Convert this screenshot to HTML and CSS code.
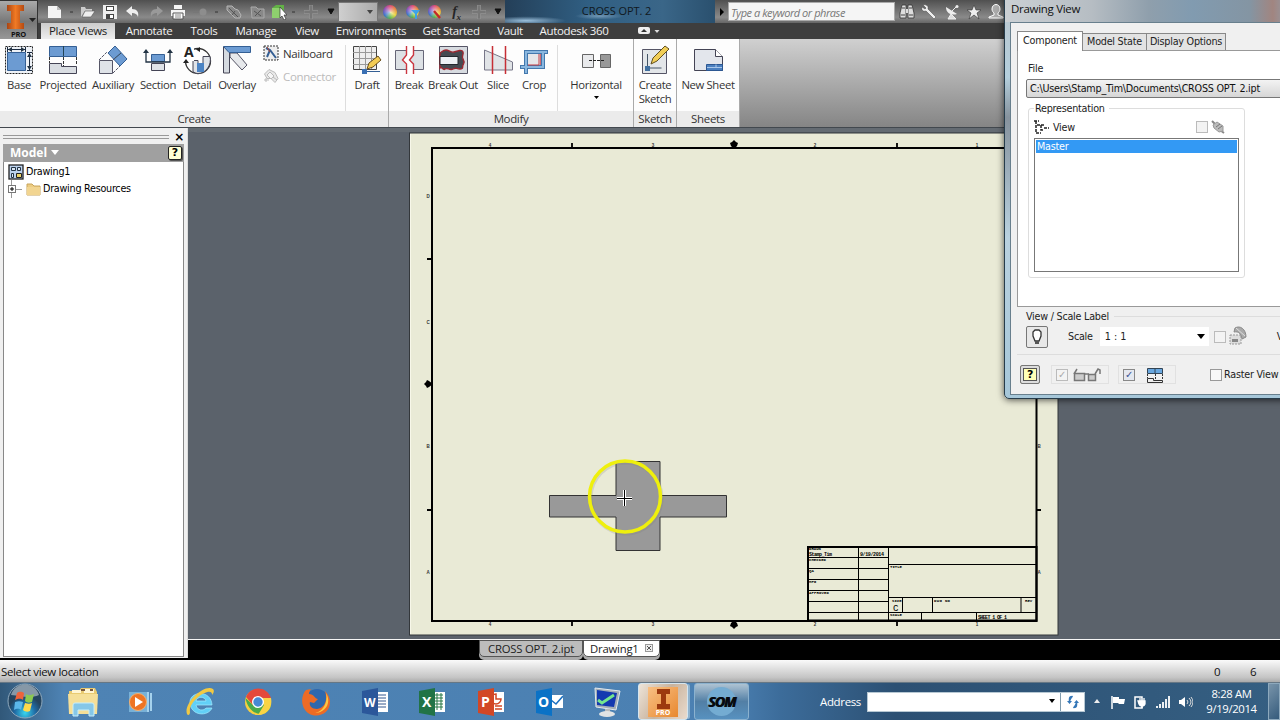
FILE: index.html
```html
<!DOCTYPE html>
<html lang="en">
<head>
<meta charset="utf-8">
<title>CROSS OPT. 2</title>
<link rel="stylesheet" href="styles.css">
</head>
<body>
<div class="screen">
  <header class="header">
    <div class="app">
      <svg width="38" height="39" viewBox="0 0 38 39"><defs><linearGradient id="or" x2="1"><stop offset="0" stop-color="#a84413"/><stop offset=".5" stop-color="#f17a24"/><stop offset="1" stop-color="#b54a12"/></linearGradient></defs><path d="M7 4h17v6h-4v12h4v6H7v-6h4V10H7z" fill="url(#or)"/><path d="M29 17h7l-3.500 4z" fill="#222"/></svg>
      <span class="app-name">PRO</span>
    </div>
    <div class="header-rows">
      <div class="quick">
        <svg width="16" height="14" viewBox="0 0 16 14"><path d="M1 1h9l4 4v8H1z" fill="#f4f4f4"/><path d="M10 1v4h4" fill="#bbb"/></svg>
        <i class="dot"></i>
        <svg width="16" height="14" viewBox="0 0 16 14"><path d="M1 12V2h4l1 2h6v2H5z" fill="#ccc"/><path d="M2 12 5 6h10l-4 6z" fill="#eee" stroke="#555" stroke-width=".6"/></svg>
        <svg width="16" height="16" viewBox="0 0 16 16"><path d="M1 1h14v14H1z" fill="#eee"/><path d="M4 2h8v5H4zM4 10h8v5H4z" fill="#444"/><path d="M5 3h6v3H5zM8 11h3v3H8z" fill="#fff"/></svg>
        <svg width="16" height="14" viewBox="0 0 16 14"><path d="M7 1v3c5 0 7 3 6 8-1-3-3-4-6-4v3L1 6z" fill="#eee"/></svg>
        <svg width="16" height="14" viewBox="0 0 16 14"><path d="M9 1v3C4 4 2 7 3 12c1-3 3-4 6-4v3l6-5z" fill="#999"/></svg>
        <svg width="16" height="16" viewBox="0 0 16 16"><path d="M4 1h8v4H4zM1 6h14v6H1z" fill="#f5f5f5"/><path d="M3 9h10v6H3z" fill="#fff" stroke="#555"/><path d="M5 11h6M5 13h6" stroke="#888"/></svg>
        <svg width="16" height="12" viewBox="0 0 16 12"><path d="M0 6h7" stroke="#777" stroke-width="2"/><circle cx="10" cy="6" r="3.500" fill="#8d8d8d"/></svg>
        <i class="dot"></i>
        <svg width="16" height="14" viewBox="0 0 16 14"><path d="M1 1h5l3 3 3 1 3 5-1 3H9L5 9 1 5z" fill="#888" stroke="#b5b5b5"/><path d="m3 3 9 9M9 6l-3 4" stroke="#555"/></svg>
        <svg width="16" height="14" viewBox="0 0 16 14"><path d="M1 2h5l2 2h6v9H2z" fill="#888" stroke="#aaa"/><path d="m4 6 7 5M11 5l-6 6" stroke="#555" fill="none"/></svg>
        <svg width="16" height="16" viewBox="0 0 16 16"><path d="M1 4 5 1h8v9l-4 4H1z" fill="#62b146"/><path d="M1 4h8v10H1z" fill="#8ed06e"/><path d="M9 3v11l2-2 2 4 2-1-2-4h3z" fill="#fff" stroke="#333" stroke-width=".7"/></svg>
        <i class="dot"></i>
        <svg width="14" height="14" viewBox="0 0 14 14"><path d="M5.500 0h3v5.500H14v3H8.500V14h-3V8.500H0v-3h5.500z" fill="#777" stroke="#999" stroke-width=".6"/></svg>
        <svg width="8" height="8" viewBox="0 0 8 8"><path d="M1 1h6L4 6z" fill="#111" stroke="#111"/></svg>
        <div class="combo"><svg width="8" height="5" viewBox="0 0 8 5"><path d="M1 0h6L4 4z" fill="#444"/></svg></div>
        <i class="ball"></i>
        <i class="ball small"><svg width="9" height="10" viewBox="0 0 9 10"><path d="M0 0h9L6 4v5H4V4z" fill="#3da2e8"/></svg></i>
        <i class="ball small"><svg width="9" height="10" viewBox="0 0 9 10"><path d="m1 1 6 7" stroke="#c22a28" stroke-width="2.500"/></svg></i>
        <span class="fx">f<sub>x</sub></span>
        <svg width="14" height="14" viewBox="0 0 14 14"><path d="M5.500 0h3v5.500H14v3H8.500V14h-3V8.500H0v-3h5.500z" fill="#777" stroke="#999" stroke-width=".6"/></svg>
        <svg width="8" height="8" viewBox="0 0 8 8"><path d="M1 1h6L4 6z" fill="#111" stroke="#111"/></svg>
        <div class="doc-title">CROSS OPT. 2</div>
        <svg width="6" height="8" viewBox="0 0 6 8"><path d="M1 0v8l4-4z" fill="#000"/></svg>
        <div class="search">Type a keyword or phrase</div>
        <svg width="16" height="16" viewBox="0 0 16 16"><path d="M3 1h4v13H1V9zM9 1h4l2 8v5H9z" fill="#ddd" stroke="#333" stroke-width=".8"/><path d="M7 5h2v4H7z" fill="#ddd"/><path d="M2 11h4M10 11h4M3 4h3M10 4h3" stroke="#444"/></svg>
        <svg width="16" height="16" viewBox="0 0 16 16"><path d="M2 1c3-1 6 1 5 4l8 8-2 2-8-8C2 8 0 6 1 3l3 2 1-1z" fill="#eee" stroke="#444" stroke-width=".5"/></svg>
        <svg width="16" height="16" viewBox="0 0 16 16"><path d="M2 3c0 6 5 9 11 7z" fill="#eee"/><path d="m8 7 5-5M7 10l-3 5h8z" stroke="#eee" fill="#ddd"/><circle cx="13" cy="2.500" r="1.500" fill="#eee"/></svg>
        <svg width="16" height="16" viewBox="0 0 16 16"><path d="m8 1 2 5h5l-4 3 2 6-5-4-5 4 2-6-4-3h5z" fill="#eee" stroke="#333" stroke-width=".6"/></svg>
        <svg width="16" height="16" viewBox="0 0 16 16"><path d="M4 5c0-6 8-6 8 0 0 2-1 3-2 4v2l5 2v1H1v-1l5-2V9C5 8 4 7 4 5z" fill="#aaa" stroke="#fff"/></svg>
      </div>
      <nav class="tabs">
        <span class="tab active">Place Views</span><span class="tab">Annotate</span><span class="tab">Tools</span><span class="tab">Manage</span><span class="tab">View</span><span class="tab">Environments</span><span class="tab">Get Started</span><span class="tab">Vault</span><span class="tab">Autodesk 360</span>
        <svg class="tab-toggle" width="22" height="8" viewBox="0 0 22 8"><rect width="12" height="7" rx="2" fill="#eee"/><path d="m3 5 3-3 3 3z" fill="#333"/><path d="M16.500 3h5L19 6z" fill="#ddd"/></svg>
      </nav>
    </div>
  </header>

  <section class="ribbon">
    <div class="panel">
      <div class="tools create">
        <div class="tool"><svg width="30" height="30" viewBox="0 0 30 30"><rect x="1.500" y="1.500" width="27" height="27" fill="#eef2f7" stroke="#222" stroke-dasharray="2 1"/><path d="M3.500 7.500h18v18h-18z" fill="#6c9bd2" stroke="#345f94"/><path d="M4 4.500h17M25.500 8v18M3.500 2v5M21.500 2v5M23 7.500h5M23 25.500h5" stroke="#1a2a40"/><path d="m8 2-4 2.500L8 7M17 2l4 2.500L17 7M23 12l2.500-4 2.500 4M23 21l2.500 4 2.500-4" fill="#234"/></svg>Base</div>
        <div class="tool"><svg width="30" height="30" viewBox="0 0 30 30"><path d="M1.500 1.500h27v10h-27z" fill="#6c9bd2" stroke="#345f94"/><path d="M15.500 1v10" stroke="#245"/><path d="M1.500 12v6m27-6v7m-13-7v9" stroke="#333" stroke-dasharray="3 1"/><path d="M1.500 18.500h12v3h15v7h-27z" fill="#d9dde2" stroke="#445"/></svg>Projected</div>
        <div class="tool"><svg width="30" height="30" viewBox="0 0 30 30"><path d="m17 1 12 13-7 7-12-13z" fill="#6c9bd2" stroke="#345f94"/><path d="m16 14 7-6" stroke="#345"/><path d="M1.500 15.500h13v13h-13z" fill="#dfe3e8" stroke="#556"/><path d="m1 15 8-8m6 21 7-7m-7-6 3-3" stroke="#556" stroke-dasharray="3 1"/></svg>Auxiliary</div>
        <div class="tool"><svg width="30" height="30" viewBox="0 0 30 30"><path d="M8.500 9.500h13v7h-13z" fill="#6c9bd2" stroke="#345f94"/><path d="M8.500 18.500h13v7h-13z" fill="#dfe3e8" stroke="#445"/><path d="M3 6v11h24V6" fill="none" stroke="#234" stroke-width="1.300"/><path d="m0 8 3-4 3 4zM24 8l3-4 3 4z" fill="#234"/></svg>Section</div>
        <div class="tool"><svg width="30" height="30" viewBox="0 0 30 30"><circle cx="16" cy="16" r="12.500" fill="none" stroke="#333" stroke-width="1.300"/><path d="M11 15.500h5v9h5v-13h7c2 8-4 17-12 17-2 0-4-1-5-2z" fill="#dfe3e8" stroke="#445"/><path d="M15 18h7v9h-7z" fill="#4c84c4"/><path d="M0 0h12v16H0z" fill="#fff"/><path d="m1 18 3-4 3 4zM18 2l-4 2.500 4 2.500z" fill="#222"/><text class="detail-letter" x="2" y="12">A</text></svg>Detail</div>
        <div class="tool"><svg width="30" height="30" viewBox="0 0 30 30"><path d="M1.500 2h6v26h-6z" fill="#d5dae0" stroke="#445"/><path d="M8 8h7l10 12-5 5L8 12z" fill="#e7e9ec" stroke="#556"/><path d="M1.500 1.500h27v6H7z" fill="#6c9bd2" stroke="#345f94"/></svg>Overlay</div>
        <div class="small-tools">
          <div class="small-tool"><svg width="16" height="16" viewBox="0 0 16 16"><rect x="1" y="1" width="14" height="14" fill="#eee" stroke="#333" stroke-dasharray="2 1"/><path d="m3 3 4 2 6 8M7 5 4 12" stroke="#345f94" stroke-width="2" fill="none"/><path d="m4 2 3 5" stroke="#a43"/></svg><span>Nailboard</span></div>
          <div class="small-tool off"><svg width="16" height="16" viewBox="0 0 16 16"><path d="M1.500 6 6 1.500l6 3 3 6-3 4-4-4H4z" fill="#e8e8e8" stroke="#bbb"/><path d="m4 7 3-3 4 4-3 3zM10 9l4 3M1 12h5M3 10v4" stroke="#bbb" fill="#f5f5f5"/></svg><span>Connector</span></div>
        </div>
        <div class="tool rule"><svg width="30" height="30" viewBox="0 0 30 30"><path d="M1.500 1.500h23v23h-23z" fill="#eee" stroke="#444"/><path d="M7.500 1v23M13.500 1v23M19.500 1v23M1 7.500h23M1 13.500h23M1 19.500h23" stroke="#999"/><path d="M11 26.500h17" stroke="#345f94"/><path d="M10 24h5v5h-5z" fill="#3a70b4"/><path d="m15 24 2-6 9-7 3 4-8 7z" fill="#f3cc54" stroke="#6b501e"/></svg>Draft</div>
      </div>
      <div class="panel-name">Create</div>
    </div>
    <div class="panel">
      <div class="tools modify">
        <div class="tool"><svg width="30" height="30" viewBox="0 0 30 30"><path d="M1.500 5.500h28v19h-28z" fill="#dde1e5" stroke="#667"/><path d="M12 0h7v10l-4 5 4 5v10h-7V20l-4-5 4-5z" fill="#fff"/><path d="M12.500 1v9l-4 5 4 4v10M19.500 1v9l-4 5 4 4v10" fill="none" stroke="#cb3640" stroke-width="1.400"/></svg>Break</div>
        <div class="tool"><svg width="30" height="30" viewBox="0 0 30 30"><path d="M1.500 1.500h28v27h-28z" fill="#d7dbe0" stroke="#556"/><path d="M2 8c2-1 3-3 6-3s5 3 8 2 8-3 9 0-2 4 0 7 1 4 0 6 1 4-3 4-4-2-7 0-6-2-8 0-3-3-5-1z" fill="#454b52" stroke="#9c2932" stroke-width="1.400"/><path d="M2 11.500h18v8H2z" fill="#edf1f5" stroke="#23282e"/></svg>Break Out</div>
        <div class="tool"><svg width="30" height="30" viewBox="0 0 30 30"><path d="M1.500 5v20h28v-8z" fill="#e1e4e7" stroke="#778"/><path d="M9.500 1v28M22.500 1v28" stroke="#c62f36" stroke-width="1.500"/></svg>Slice</div>
        <div class="tool"><svg width="30" height="30" viewBox="0 0 30 30"><path d="M8 7h13v14H8z" fill="#e0e0e5" stroke="#c23a42" stroke-width="1.500"/><path d="M7 29V7h22M1 22h23V5" fill="none" stroke="#4378ad" stroke-width="4"/><path d="M7 28V7h21M2 22h22V6" fill="none" stroke="#8ab7df" stroke-width="2"/><path d="M9 9h12v11H9z" fill="#e5e6e9"/><path d="M20 9v11H9" fill="none" stroke="#c23a42"/></svg>Crop</div>
        <div class="tool rule"><svg width="30" height="30" viewBox="0 0 30 30"><path d="M1.500 9.500h11v13h-11z" fill="#e9eaec" stroke="#666"/><path d="M19.500 9.500h10v13h-10z" fill="#999" stroke="#666"/><path d="M8 15.500h15" stroke="#222" stroke-dasharray="3 1"/></svg>Horizontal<svg class="more" width="5" height="4" viewBox="0 0 5 4"><path d="M0 0h5L2.500 3z"/></svg></div>
      </div>
      <div class="panel-name">Modify</div>
    </div>
    <div class="panel">
      <div class="tools sketch"><div class="tool"><svg width="30" height="30" viewBox="0 0 30 30"><path d="M2.500 4.500h24v24h-24z" fill="#e3e6e9" stroke="#556"/><path d="M7.500 9v14h14" fill="none" stroke="#456"/><path d="M5 21h5v5H5z" fill="#416f9f"/><path d="m11 19 2-6L25 1l4 3-12 12z" fill="#f1ce57" stroke="#62501e"/></svg>Create<br>Sketch</div></div>
      <div class="panel-name">Sketch</div>
    </div>
    <div class="panel">
      <div class="tools sheets"><div class="tool"><svg width="30" height="30" viewBox="0 0 30 30"><path d="M1.500 4.500h21l7 7v14h-28z" fill="#e3e6ec" stroke="#445"/><path d="M22.500 4.500v7h7" fill="#fff" stroke="#445"/><path d="M13.500 19.500h16v6h-16z" fill="#4b80c0" stroke="#2c5792"/><path d="M14 22.500h15m-6-3v3" stroke="#a9c7ea"/></svg>New Sheet</div></div>
      <div class="panel-name">Sheets</div>
    </div>
  </section>

  <main class="workspace">
    <aside class="browser">
      <div class="grip"><i></i><b>×</b></div>
      <div class="browser-title"><span>Model</span><svg width="8" height="6" viewBox="0 0 8 6"><path d="M0 0h8L4 5z" fill="#fff"/></svg><em class="help">?</em></div>
      <div class="tree">
        <div class="node"><svg width="16" height="16" viewBox="0 0 16 16"><rect x="1" y="1" width="14" height="14" fill="#bcd2ee" stroke="#222" stroke-width="1.300"/><path d="M3.500 3.500h4v3h-4zM9.500 3.500h3v3h-3zM3.500 9.500h2v4h-2z" fill="#dce8f5" stroke="#234"/><path d="M8.500 9.500h5v4h-5z" fill="#ecd368" stroke="#222"/></svg><span>Drawing1</span></div>
        <div class="node"><svg width="18" height="18" viewBox="0 0 18 18"><path d="M5.500 0v18M6 9.500h10" stroke="#999"/><rect x="2.500" y="5.500" width="7" height="7" fill="#fff" stroke="#777"/><path d="M4 9h4M6 7v4" stroke="#000"/></svg><svg width="15" height="14" viewBox="0 0 15 14"><path d="M1 2h5l2 2h6v9H1z" fill="#eccc82" stroke="#c8a45b"/><path d="M1 5h13v8H1z" fill="#f2d591"/></svg><span>Drawing Resources</span></div>
      </div>
    </aside>
    <div class="document">
      <svg class="sheet" width="1092" height="511" viewBox="188 128 1092 511">
        <path d="M188 128h1092v4H188z" fill="#646b72"/>
        <rect x="409.500" y="133" width="648.500" height="502" fill="#e9ead6" stroke="#33373b"/>
        <path d="M410.500 134v500" stroke="#f7f7e9"/>
        <rect x="432" y="148" width="604.500" height="473" fill="none" stroke="#000" stroke-width="2"/>
        <g stroke="#000" stroke-width="1.800"><path d="M572 143v5M897 143v5M572 621v5M897 621v5M427 259h5M427 510h5M1037 510h4"/></g>
        <path d="M734 140l2 2 2 1-1 3-3 3-3-3-1-3 2-1zM734 629l2-2 2-1-1-3-3-3-3 3-1 3 2 1zM424 384l2-2 1-2 2 1 4 3-4 3-2 1-1-2z" fill="#000"/>
        <g font-family="Liberation Sans" font-size="4.500" font-weight="bold" text-anchor="middle" fill="#333"><text x="490" y="147">4</text><text x="653" y="147">3</text><text x="815" y="147">2</text><text x="977" y="147">1</text><text x="490" y="626">4</text><text x="653" y="626">3</text><text x="815" y="626">2</text><text x="977" y="626">1</text><text x="428" y="198">D</text><text x="428" y="324">C</text><text x="428" y="448">B</text><text x="428" y="574">A</text><text x="1039" y="448">B</text><text x="1039" y="574">A</text></g>
        <path d="M549.500 495.500H616v-34h44v34h66.500V517H660v33.500h-44V517h-66.500z" fill="#999" stroke="#333"/>
        <circle cx="626" cy="498" r="35.500" fill="none" stroke="#777" stroke-opacity=".2" stroke-width="4"/>
        <circle cx="625" cy="496.500" r="35.500" fill="none" stroke="#eff00c" stroke-width="3.500"/>
        <path d="M617 498.500h15M624.500 490v16" stroke="#fff" stroke-width="3"/><path d="M617 498.500h15M624.500 490v16" stroke="#000" stroke-width="1"/>
        <path d="M808 547h228.500v73.500H808z" fill="none" stroke="#000" stroke-width="2"/>
        <path d="M858.500 547v73M888.500 547v73M808 557.500h81M808 568.500h81M808 579.500h81M808 590.500h81M808 601.500h81M808 612.500h228M889 564.500h147M889 597.500h147M902.500 597v15M932.500 597v15M1021 597v15M921.500 612v8M976.500 612v8" fill="none" stroke="#000" stroke-width="1"/>
        <g font-family="Liberation Mono" font-size="4" font-weight="bold"><text x="809" y="550">DRAWN</text><text x="809" y="555.500" font-size="5" textLength="23">Stamp_Tim</text><text x="860" y="555.500" font-size="5" textLength="24">9/19/2014</text><text x="809" y="561" textLength="17">CHECKED</text><text x="809" y="572">QA</text><text x="809" y="583">MFG</text><text x="809" y="594" textLength="20">APPROVED</text><text x="890" y="568">TITLE</text><text x="892" y="602">SIZE</text><text x="893" y="610.500" font-size="9" font-weight="normal">C</text><text x="934" y="602" textLength="16">DWG NO</text><text x="1025" y="602">REV</text><text x="890" y="616">SCALE</text><text x="978" y="618.500" textLength="29" font-size="5">SHEET 1 OF 1</text></g>
      </svg>
      <div class="doc-tabs"><div class="doc-tab">CROSS OPT. 2.ipt</div><div class="doc-tab current">Drawing1<svg width="8" height="8" viewBox="0 0 8 8"><rect x=".5" y=".5" width="7" height="7" fill="#eee" stroke="#999"/><path d="m2 2 4 4m0-4L2 6" stroke="#555"/></svg></div></div>
    </div>
  </main>

  <footer class="status"><span>Select view location</span><b>0</b><b>6</b></footer>

  <div class="taskbar">
    <svg width="38" height="37" viewBox="0 0 38 37"><defs><radialGradient id="orb" cy=".85"><stop offset="0" stop-color="#39d6ef"/><stop offset=".6" stop-color="#1f6ba5"/><stop offset="1" stop-color="#24445f"/></radialGradient></defs><circle cx="19" cy="18" r="17" fill="url(#orb)" stroke="#8fa9bd"/><path d="M5 12C9-2 29-2 33 12c-9 4-18 1-28 0z" fill="#fff" opacity=".45"/><path d="M11 10c3-2 5-1 7 0l-1 7c-3-2-5-1-8 0z" fill="#ee633b"/><path d="M20 11c3 2 5 1 8 0l-2 8c-3 1-5 1-7-1z" fill="#8bc951"/><path d="M9 19c3-1 5-1 8 0l-2 8c-2-2-5-1-7 0z" fill="#5bb7e9"/><path d="M19 20c3 1 5 1 7 0l-2 8c-2 1-5 1-7-1z" fill="#ffd94b"/></svg>
    <svg width="32" height="30" viewBox="0 0 32 30"><path d="M2 4h10l2-3h14l2 4v22H2z" fill="#e9cb72"/><path d="M5 3h9v3H5zM17 2h10v4H17z" fill="#fff5d2"/><path d="M1 7h30l-1 20H2z" fill="#f5df98"/><path d="M6 29V18q0-2 2-2h17q2 0 2 2v11h-5v-6H11v6z" fill="#86c7e8" stroke="#c7eefb"/><path d="M14 3h4M23 3h3" stroke="#79573d" stroke-width="2"/></svg>
    <svg width="26" height="26" viewBox="0 0 26 26"><path d="M1 3h18v20H1z" fill="#78b1d7"/><path d="M20 3v20M23 4v18" stroke="#a5d2ed" stroke-width="2"/><circle cx="10" cy="13" r="8.500" fill="#ee7424" stroke="#f2b071"/><path d="m7 8 8 5-8 5z" fill="#fff"/></svg>
    <svg width="32" height="32" viewBox="0 0 32 32"><path fill-rule="evenodd" d="M28 22C24 31 7 30 6 17 5 5 27 3 28 19H12c1 6 8 6 10 3zM12 15h10c-1-5-9-5-10 0z" fill="#62d0f7" stroke="#a4edff" stroke-width=".7"/><path d="M3 28C-1 17 21-3 29 3c2 2 0 5-1 6 1-10-24 5-22 17 0 3-2 4-3 2z" fill="#f2c943"/></svg>
    <svg width="28" height="28" viewBox="0 0 28 28"><circle cx="14" cy="14" r="13" fill="#f6cf40"/><path d="M14 14H27C28 30 5 31 1.500 10L9 17z" fill="#4aaa4b"/><path d="M27 10H14l-5 7L2 9C7-3 23-2 27 10z" fill="#e4493b"/><path d="M14 10h13c2 10-4 17-13 17l6-10z" fill="#fad445"/><circle cx="14" cy="14" r="6" fill="#fff"/><circle cx="14" cy="14" r="4.700" fill="#4689d3"/></svg>
    <svg width="30" height="30" viewBox="0 0 30 30"><circle cx="16" cy="14" r="12" fill="#2f68ad"/><path d="M5 3c-5 5-6 17 2 23 9 6 22 1 22-11 0-4-2-8-5-11 3 9 0 17-8 18-6 0-8-4-7-7l4 1 4-4c-3 0-4-5-9-5 0-2 1-4 2-5z" fill="#ed6b26"/><path d="M25 6c6 10-1 20-11 20 9-2 13-12 11-20z" fill="#fac944"/></svg>
    <svg width="28" height="28" viewBox="0 0 28 28"><path d="M15 4h12v20H15z" fill="#fff"/><path d="M16 7h9M16 10h9M16 13h9M16 16h9M16 19h9" stroke="#34588f"/><path d="M1 3 17 0v28L1 25z" fill="#2b579a"/><text class="office" x="3" y="19" font-size="12">W</text></svg>
    <svg width="28" height="28" viewBox="0 0 28 28"><path d="M15 4h12v20H15z" fill="#fff"/><path d="M17 7h8M17 10h8M17 13h8M17 16h8M17 19h8M19 5v17M23 5v17" stroke="#287946"/><path d="M1 3 17 0v28L1 25z" fill="#217346"/><text class="office" x="4" y="19" font-size="14">X</text></svg>
    <svg width="28" height="28" viewBox="0 0 28 28"><path d="M15 4h12v20H15z" fill="#fff"/><path d="M19 6v5h5a5 5 0 1 1-5-5zM18 18h7M18 21h7" stroke="#d24726" stroke-width="1.500" fill="none"/><path d="M1 3 17 0v28L1 25z" fill="#d24726"/><text class="office" x="4" y="19" font-size="14">P</text></svg>
    <svg width="28" height="28" viewBox="0 0 28 28"><path d="M15 7h13v13H15z" fill="#fff"/><path d="m16 12 5 4 7-8" fill="none" stroke="#1b70c1" stroke-width="1.500"/><path d="M1 3 17 0v28L1 25z" fill="#0b72c6"/><text class="office" x="3" y="19" font-size="14">O</text></svg>
    <svg width="30" height="32" viewBox="0 0 30 32"><path d="m3 2 25 3-4 19-20-3z" fill="#a4aeb7" stroke="#e3e9ee"/><path d="m5 4 20 3-3 14-17-2z" fill="#1439b0"/><path d="m6 14 4 3 12-8" fill="none" stroke="#74e58f" stroke-width="3"/><path d="M13 23h5v3h-5z" fill="#bbb"/><ellipse cx="15" cy="28" rx="8" ry="3" fill="#e1e3e4"/></svg>
    <div class="task inventor"><div class="inv"><svg width="30" height="29" viewBox="0 0 30 29"><path d="M9 2h13v5h-4v10h4v5H9v-5h4V7H9z" fill="#9c390f"/></svg><span>PRO</span></div></div>
    <div class="task som"><span>SOM</span></div>
    <span class="address">Address</span>
    <div class="address-box"><i></i><svg width="8" height="5" viewBox="0 0 8 5"><path d="M1 0h6L4 4z"/></svg><b><svg width="14" height="14" viewBox="0 0 14 14"><path d="M3.500 7V4c0-2 1-3 3.500-3M1 6h5L3.500 9zM10.500 7v3c0 2-1 3-3.500 3M8 8h5l-2.500-3z" fill="#3577b8"/><path d="M3.500 7V4q0-2.500 3-2.500M10.500 7v3q0 2.500-3 2.500" fill="none" stroke="#3577b8" stroke-width="1.500"/></svg></b></div>
    <svg width="8" height="5" viewBox="0 0 8 5"><path d="m1 4 3-4 3 4z" fill="#eee"/></svg>
    <svg width="14" height="14" viewBox="0 0 14 14"><path d="M1 1v13" stroke="#fff" stroke-width="1.500"/><path d="M2 2h6v2h6l-1 5H8L7 8H2z" fill="#fff"/></svg>
    <svg width="14" height="14" viewBox="0 0 14 14"><path d="M2 2h7v11H2z" fill="none" stroke="#fff" stroke-width="1.500"/><path d="M5 6h7v3c-1 3-5 3-6 0zM7 3v3M11 3v3M9 10v3" fill="#fff" stroke="#fff" stroke-width="1.300"/></svg>
    <svg width="14" height="14" viewBox="0 0 14 14"><path d="M1 13v-2M4 13V9M7 13V7M10 13V4M13 13V1" stroke="#fff" stroke-width="1.800"/></svg>
    <svg width="15" height="14" viewBox="0 0 15 14"><path d="M1 5h2l4-3v10L3 9H1z" fill="#fff"/><path d="M9 5q2 2 0 4M11 3q4 4 0 8M13 2q4 5 0 10" fill="none" stroke="#ddd"/></svg>
    <div class="clock"><span>8:28 AM</span><span>9/19/2014</span></div>
    <div class="desktop-peek"></div>
  </div>

  <section class="dialog">
    <h1 class="dialog-title">Drawing View</h1>
    <div class="dialog-body">
      <div class="dialog-tabs"><span class="current">Component</span><span>Model State</span><span>Display Options</span></div>
      <div class="dialog-page">
        <label class="file-label">File</label>
        <div class="file">C:\Users\Stamp_Tim\Documents\CROSS OPT. 2.ipt</div>
        <fieldset class="representation"><legend>Representation</legend>
          <div class="view-row"><svg width="15" height="14" viewBox="0 0 15 14"><path d="M0 1h5M2 1v12h5M3 5h4v5h3M7 5h3M10 8h5" stroke="#222" stroke-width="1.500" fill="none" stroke-dasharray="3 1"/></svg><span>View</span><i class="check off"></i><svg width="14" height="14" viewBox="0 0 14 14"><path d="M1 1l3 3M9 10l4 3" stroke="#888" stroke-width="2"/><path d="m2 5 4-3 6 4v5l-4 1-5-4z" fill="#bbb" stroke="#999"/><path d="m5 7 4-3M7 9l4-3" stroke="#777"/></svg></div>
          <div class="list"><div>Master</div></div>
        </fieldset>
      </div>
      <div class="label-heading"><span>View / Scale Label</span><i></i></div>
      <div class="scale-row"><div class="bulb"><svg width="12" height="16" viewBox="0 0 12 16"><path d="M4 12 2 7V3l2-2h4l2 2v4l-2 5z" fill="#fff" stroke="#333" stroke-width="1.300"/><path d="M4 12h4v3H4z" fill="#555"/></svg></div><span>Scale</span><div class="scale-input">1 : 1<svg width="8" height="5" viewBox="0 0 8 5"><path d="M0 0h8L4 5z"/></svg></div><i class="check off"></i><svg class="scale-tag" width="18" height="19" viewBox="0 0 18 19"><path d="M1 9h11v9H1z" fill="#ddd" stroke="#999" stroke-dasharray="2 1"/><path d="M6 2c5-3 11 1 11 9l-4 2C12 8 10 5 5 6z" fill="#aaa" stroke="#888"/><path d="m7 2 9 8" stroke="#ddd"/><path d="M3 13h6v3H3z" fill="#888"/></svg><span class="visible-label">V</span></div>
      <div class="options-row"><em class="help boxed">?</em><div class="option glasses"><i class="check off">✓</i><svg width="28" height="14" viewBox="0 0 28 14"><path d="M1.500 5.500h10v7h-10zM15.500 6.500h7v6h-7z" fill="#ccc" stroke="#777" stroke-width="1.500"/><path d="M11 6h5M1 6l3-5M22 6l3-5 2 1v4" fill="none" stroke="#777" stroke-width="1.500"/></svg></div><div class="option projection"><i class="check blue">✓</i><svg width="16" height="16" viewBox="0 0 16 16"><path d="M.5 1.500h15v5H.5zM8 1v5" fill="#69a7df" stroke="#345"/><path d="M.5 7v4m15-4v5M8.500 7v5" stroke="#333" stroke-dasharray="2 1"/><path d="M.5 11.500h6v2h9v2H.5z" fill="#eee" stroke="#333"/></svg></div><i class="check raster"></i><span>Raster View</span></div>
    </div>
  </section>
</div>
</body>
</html>
```
FILE: styles.css
```css
* { box-sizing: border-box; }
body { margin: 0; overflow: hidden; }
.screen { position: relative; width: 1280px; height: 720px; overflow: hidden; display: flex; flex-direction: column; background: #000; font: 11.5px "Open Sans", "Noto Sans", sans-serif; letter-spacing: -.35px; color: #333; }
svg { display: block; flex: none; }
svg text { letter-spacing: 0; }
i, em { font-style: normal; }

.header { height: 39px; flex: none; display: flex; background: #3e3e3e; }
.app { width: 38px; display: grid; background: linear-gradient(#aaa, #777 55%, #989898); border: solid #333; border-width: 1px 1px 0 0; }
.app > * { grid-area: 1 / 1; }
.app-name { align-self: end; margin: 0 0 1px 11px; font-size: 7.500px; font-weight: bold; line-height: 9px; letter-spacing: -.2px; color: #111; }
.header-rows { flex: 1; min-width: 0; }
.quick { height: 23px; padding-left: 6px; display: grid; align-items: center; justify-items: center; grid-template-columns: 22px 11px 22px 22px 23px 23px 22px 23px 9px 26px 21px 21px 9px 26px 13px 42px 22px 22px 22px 23px 22px 15px 210px 13px 167px 23px 22px 23px 22px 22px; background: linear-gradient(#505050, #8a8a8a 75%, #666); }
.dot { width: 3px; height: 2px; background: #555; }
.combo { align-self: stretch; width: 40px; margin: 2px 0 1px; display: flex; align-items: center; justify-content: flex-end; padding-right: 3px; background: linear-gradient(90deg, #cfcfcf, #aaa); border: 1px solid #777; }
.ball { width: 14px; height: 14px; border-radius: 50%; background: radial-gradient(circle, #ffffffaa, transparent 65%), conic-gradient(#dc4a76, #e5843c, #e9d840, #56b34b, #3b71cd, #884eb7, #dc4a76); }
.ball.small { width: 13px; height: 13px; padding: 5px 0 0 5px; }
.fx { font: italic bold 14px/18px "Liberation Serif", serif; color: #252525; }
.fx sub { font-size: 9px; line-height: 0; }
.doc-title { align-self: stretch; width: 210px; padding-left: 13px; text-align: center; line-height: 21px; letter-spacing: -.1px; color: #101820; font-size: 11px; background: radial-gradient(ellipse at 10% 90%, #9bc0dc, transparent 15%), radial-gradient(ellipse at 45% 70%, #7298b6, transparent 15%), linear-gradient(90deg, #243f58, #305f83 40%, #3a6688 75%, #2a506e); }
.search { width: 167px; height: 19px; align-self: start; margin-top: 2px; padding-left: 2px; font-style: italic; line-height: 19px; color: #777; background: #f5f5f5; border: 1px solid #aaa; white-space: nowrap; font-size: 11px; letter-spacing: -.45px; }
.tabs { height: 16px; padding-left: 3px; display: grid; grid-template-columns: 74px 68px 42px 62px 40px 88px 72px 46px 82px 60px; }
.tab { line-height: 15px; text-align: center; color: #f2f2f2; white-space: nowrap; }
.tab.active { color: #222; background: linear-gradient(#ccc, #eee); }
.tab-toggle { margin: 4px 0 0 23px; }

.ribbon { height: 89px; flex: none; display: flex; background: linear-gradient(#d0d0d0, #858585); border-bottom: 1px solid #42484e; }
.panel { display: flex; flex-direction: column; border-right: 1px solid #aaa; background: #fdfdfd; }
.tools { height: 72px; display: grid; padding-top: 6px; }
.create { grid-template-columns: 38px 50px 50px 40px 38px 42px 87px 43px; }
.modify { grid-template-columns: 40px 48px 42px 38px 76px; }
.sketch { grid-template-columns: 42px; }
.sheets { grid-template-columns: 62px; }
.tool { display: flex; flex-direction: column; align-items: center; line-height: 14px; gap: 3px; white-space: nowrap; text-align: center; font-size: 11.3px; }
.detail-letter { font: bold 14px "Open Sans", sans-serif; fill: #222; }
.sketch .tool { display: block; }
.sketch .tool svg { margin: 0 auto 3px; }
.modify .tool:nth-child(4) { margin-right: 8px; }
.modify .tool:nth-child(5) { padding-left: 1px; }
.tool.rule { border-left: 1px solid #ddd; }
.more { margin-top: 1px; }
.small-tools { padding-left: 5px; display: flex; flex-direction: column; gap: 7px; }
.small-tool { display: flex; align-items: center; gap: 4px; height: 16px; }
.small-tool.off { color: #bbb; }
.panel-name { height: 16px; line-height: 16px; text-align: center; background: #ebebeb; }

.workspace { height: 532px; flex: none; display: flex; }
.browser { width: 188px; height: 530px; background: #f0f0f0; border-right: 1px solid #ddd; padding: 2px 3px 1px 3px; display: flex; flex-direction: column; color: #000; font-family: "DejaVu Sans Condensed", "DejaVu Sans", sans-serif; font-size: 10.7px; letter-spacing: -.25px; }
.grip { height: 14px; display: flex; align-items: center; gap: 5px; }
.grip i { width: 168px; height: 4px; border: solid #999; border-width: 1px 0; }
.grip b { font: bold 12px/12px "DejaVu Sans", sans-serif; }
.browser-title { height: 18px; display: flex; align-items: center; gap: 4px; padding: 0 2px 0 7px; background: #a0a0a0; color: #fff; font: bold 12px/18px "Open Sans", sans-serif; letter-spacing: 0; }
.help { width: 14px; height: 14px; border: 1px solid #222; border-radius: 2px; background: #ffffd5; color: #000; text-align: center; font: bold 11px/12px "DejaVu Sans", sans-serif; box-shadow: 1px 1px 0 #555; }
.browser-title .help { margin-left: auto; }
.tree { flex: 1; border: 1px solid #888; border-top: 0; background: #fff; padding: 1px 0 0 4px; }
.node { height: 17px; display: flex; align-items: center; gap: 2px; }
.node + .node { margin-left: -2px; }

.document { flex: 1; min-width: 0; background: #5b626b; }
.doc-tabs { height: 21px; display: flex; padding-left: 291px; background: #000; border-top: 1px solid #f5f5f5; font-size: 11.3px; letter-spacing: -.2px; color: #222; }
.doc-tab { width: 104px; height: 17px; line-height: 16px; text-align: center; border: 1px solid #555; border-radius: 0 0 5px 5px; background: #bcbcbc; box-shadow: 0 3px #aaa; white-space: nowrap; }
.doc-tab.current { width: 77px; display: flex; padding-left: 6px; gap: 6px; background: #fff; }
.doc-tab svg { margin-top: 3px; }

.status { height: 23px; flex: none; display: grid; grid-template-columns: 1199px 36px 36px; line-height: 24px; color: #111; background: linear-gradient(#fafafa, #c4c4c4 80%, #aaa); border-bottom: 1px solid #667785; }
.status span { padding-left: 1px; }
.status b { font-weight: normal; text-align: center; }
.taskbar { height: 37px; flex: none; display: grid; align-items: center; justify-items: center; grid-template-columns: 50px 66px 49px 70px 45px 71px 47px 67px 51px 65px 52px 58px 57px 117px 222px 20px 22px 22px 23px 22px 71px 13px; background: linear-gradient(90deg, #315879, #4e83b4 5%, #4b80b2 57%, #3c6c9a 61%, #2c5073 70%, #355f82); color: #fff; }
.office { fill: #fff; font-family: "Open Sans", sans-serif; font-weight: bold; }
.task { height: 37px; border: 1px solid #d4e5ef; border-radius: 3px; display: flex; align-items: center; justify-content: center; }
.inventor { justify-self: end; margin-right: 3px; width: 50px; background: linear-gradient(120deg, #eee4d8, #c8b39e, #eadbcd); box-shadow: 3px 0 0 -1px #8fb3cf; }
.inv { width: 30px; height: 30px; display: grid; background: linear-gradient(135deg, #f8c084, #e8882f); }
.inv > * { grid-area: 1 / 1; }
.inv span { align-self: end; text-align: center; font: bold 7px/8px "Open Sans", sans-serif; letter-spacing: 0; }
.som { width: 55px; margin-left: 4px; background: linear-gradient(#aec3d3, #527fa5 50%, #5791bf); border-color: #8bb2cf; color: #050a10; font: italic bold 14px "Open Sans", sans-serif; letter-spacing: -1px; }
.som span { width: 29px; height: 29px; line-height: 29px; border-radius: 50%; background: #74acd2; display: flex; justify-content: center; text-shadow: 1px 0 #111; }
.address { justify-self: end; padding-right: 4px; }
.address-box { width: 218px; height: 20px; display: flex; align-items: center; background: #fff; border: 1px solid #b7c8d3; }
.address-box i { flex: 1; }
.address-box b { width: 24px; height: 18px; margin-left: 4px; display: grid; place-items: center; border-left: 1px solid #7f9bae; }
.clock { display: flex; flex-direction: column; align-items: center; line-height: 15px; padding-bottom: 1px; font-size: 11.3px; white-space: nowrap; }
.desktop-peek { width: 12px; height: 37px; border: 1px solid #8da9bd; background: linear-gradient(135deg, #7894aa, #355b7c); }

/* Floating Drawing View window, extending past the right screen edge. */
.dialog { position: absolute; left: 1004px; top: -4px; width: 290px; height: 403px; border: 1px solid #263c4b; border-radius: 5px; padding: 3px 0 5px 5px; background: linear-gradient(#bcc6cd, #b4cfdd 20%, #86929d 30%, #b9d1df 60%, #a6c7d9); box-shadow: 0 1px 7px #000a; font-family: "DejaVu Sans Condensed", "DejaVu Sans", sans-serif; font-size: 10.7px; color: #222; letter-spacing: -.23px; }
.dialog-title { margin: 0 0 0 -5px; padding-left: 6px; height: 22px; font: 11.5px/18px "Open Sans", sans-serif; letter-spacing: -.3px; color: #111; background: linear-gradient(90deg, #cbd0d4, #b6bdc3 30%, #8f9fac 50%, #819bb0 65%, #8495a3 85%, #a18580 93%, #8fa3b3); }
.dialog-body { height: 373px; border: 1px solid #687f8d; border-right: 0; background: #f0f0f0; padding: 7px 0 0 6px; }
.dialog-tabs { height: 20px; display: flex; align-items: flex-end; }
.dialog-tabs span { height: 17px; line-height: 16px; border: 1px solid #888; border-bottom: 0; border-left: 0; background: #e3e3e3; width: 64px; text-align: center; white-space: nowrap; }
.dialog-tabs span:nth-child(3) { width: 79px; }
.dialog-tabs span.current { position: relative; z-index: 1; width: 66px; height: 20px; line-height: 18px; margin-bottom: -1px; border-left: 1px solid #888; background: #fff; }
.dialog-page { height: 257px; padding: 10px 0 0 8px; border: 1px solid #999; border-right: 0; background: #fff; }
.file-label { display: block; height: 18px; line-height: 16px; padding-left: 2px; }
.file { height: 19px; line-height: 17px; padding-left: 3px; border: 1px solid #777; border-radius: 2px; background: linear-gradient(#f3f3f3, #d6d6d6); color: #111; white-space: nowrap; }
.representation { width: 217px; height: 176px; margin: 4px 0 0 2px; padding: 3px 5px 0; border: 1px solid #ddd; border-radius: 3px; }
.representation legend { padding: 0 4px 0 1px; line-height: 13px; }
.view-row { height: 18px; display: flex; align-items: center; gap: 4px; }
.view-row .check { margin-left: 117px; }
.view-row .check + svg { margin-left: -1px; }
.list { width: 205px; height: 134px; margin-top: 2px; padding: 1px; border: 1px solid #777; background: #fff; }
.list div { height: 13px; line-height: 13px; padding-left: 1px; color: #fff; background: #3399f4; }
.label-heading { height: 19px; padding: 0 0 0 9px; display: flex; align-items: center; gap: 5px; white-space: nowrap; }
.label-heading i { flex: 1; border-top: 1px solid #ddd; }
.scale-row { height: 29px; display: flex; align-items: center; padding: 0 0 7px 9px; border-bottom: 1px solid #ddd; }
.bulb { width: 22px; height: 22px; margin-right: 20px; display: grid; place-items: center; border: 1px solid #777; border-radius: 2px; background: #e8e8e8; flex: none; }
.scale-input { width: 109px; height: 19px; margin: 0 5px 0 7px; padding: 0 4px 0 5px; display: flex; align-items: center; justify-content: space-between; background: #fff; flex: none; letter-spacing: 0; }
.scale-tag { margin: -3px 0 0 3px; }
.visible-label { margin-left: 30px; }
.check { width: 12px; height: 12px; border: 1px solid #999; background: #f8f8f8; text-align: center; font: bold 10px/10px "DejaVu Sans", sans-serif; flex: none; }
.check.off { color: #aaa; border-color: #bbb; background: #f3f3f3; }
.check.blue { color: #3b5194; background: #e4e8f0; border-color: #888; }
.options-row { height: 29px; margin-top: 5px; padding-left: 3px; display: flex; align-items: center; white-space: nowrap; }
.help.boxed { width: 20px; height: 19px; line-height: 17px; border-color: #777; border-radius: 2px; background: #ffffb6; box-shadow: inset 0 0 0 2px #ddd, inset 0 0 0 3px #555; }
.option { height: 19px; display: flex; align-items: center; border: 1px solid #e1e1e1; }
.glasses { width: 58px; margin-left: 11px; padding-left: 4px; gap: 5px; }
.projection { width: 58px; margin-left: 9px; padding-left: 4px; gap: 12px; }
.raster { margin: 0 2px 0 34px; }
```
